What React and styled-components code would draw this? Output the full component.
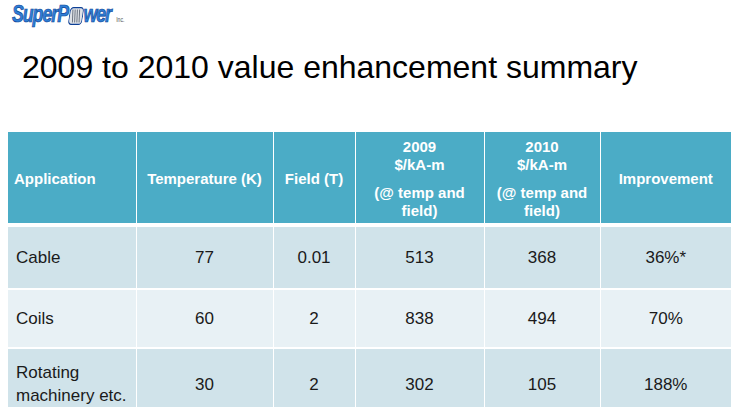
import styled, { createGlobalStyle } from "styled-components";

const GlobalStyle = createGlobalStyle`
  html, body {
    margin: 0;
    padding: 0;
    background: #ffffff;
    overflow: hidden;
  }
  body {
    font-family: "Liberation Sans", Arial, sans-serif;
  }
`;

const Page = styled.div`
  width: 732px;
  height: 407px;
  overflow: hidden;
  display: flex;
  flex-direction: column;
`;

const LogoRow = styled.div`
  display: flex;
  align-items: flex-end;
  height: 30px;
  padding-left: 12px;
`;

const Brand = styled.div`
  display: flex;
  align-items: center;
  transform: scaleX(0.74);
  transform-origin: left bottom;
`;

const Word = styled.span`
  font-size: 24px;
  font-weight: 700;
  font-style: italic;
  letter-spacing: -1.4px;
  color: #2f7fd6;
  -webkit-text-stroke: 0.7px #0d3f95;
  line-height: 28px;
`;

const Inc = styled.span`
  font-size: 7px;
  color: #555;
  line-height: 10px;
  margin: 12px 0 0 7px;
`;

const Title = styled.h1`
  margin: 19px 0 0 22px;
  font-size: 32px;
  font-weight: 400;
  line-height: 40px;
  color: #000;
`;

const Table = styled.table`
  margin: 45px 0 0 8px;
  width: 723px;
  border-collapse: collapse;
  table-layout: fixed;
`;

const HeadCell = styled.th`
  background: #4bacc6;
  color: #ffffff;
  font-size: 15px;
  font-weight: 700;
  height: 88px;
  padding: 3px 6px 0;
  text-align: ${(p) => (p.$left ? "left" : "center")};
  line-height: 18px;
  border-right: 1px solid #ffffff;
  border-bottom: 4px solid #ffffff;
  &:last-child {
    border-right: none;
  }
`;

const Para = styled.div`
  & + & {
    margin-top: 10px;
  }
`;

const Row = styled.tr`
  background: ${(p) => (p.$alt ? "#e8f1f5" : "#d0e3ea")};
  height: ${(p) => p.$h}px;
`;

const Cell = styled.td`
  font-size: 17px;
  color: #1a1a1a;
  padding: 0 8px;
  line-height: 23px;
  text-align: ${(p) => (p.$left ? "left" : "center")};
  border-right: 1px solid #ffffff;
  border-bottom: 2px solid #ffffff;
  &:last-child {
    border-right: none;
  }
`;

const Tire = () => (
  <svg width="19" height="18" viewBox="0 0 19 18" style={{ margin: "3px 1px 0", transform: "skewX(-12deg)" }}>
    <rect x="0.6" y="0.6" width="17.8" height="16.8" rx="4" fill="#dfe3e8" stroke="#0d3f95" strokeWidth="1.2" />
    {[4, 7, 10, 13].map((x) => (
      <line key={x} x1={x} y1="2.5" x2={x + 2} y2="15.5" stroke="#6b7380" strokeWidth="1.3" />
    ))}
  </svg>
);

const widths = [128, 137, 82, 129, 116, 131];

const rows = [
  { h: 64, cells: ["Cable", "77", "0.01", "513", "368", "36%*"] },
  { h: 59, alt: true, cells: ["Coils", "60", "2", "838", "494", "70%"] },
  { h: 72, cells: [<>Rotating<br />machinery etc.</>, "30", "2", "302", "105", "188%"] },
];

export default function App() {
  return (
    <Page>
      <GlobalStyle />
      <LogoRow>
        <Brand>
          <Word>SuperP</Word>
          <Tire />
          <Word>wer</Word>
          <Inc>Inc.</Inc>
        </Brand>
      </LogoRow>
      <Title>2009 to 2010 value enhancement summary</Title>
      <Table>
        <colgroup>
          {widths.map((w, i) => (
            <col key={i} style={{ width: w }} />
          ))}
        </colgroup>
        <thead>
          <tr>
            <HeadCell $left>Application</HeadCell>
            <HeadCell>Temperature (K)</HeadCell>
            <HeadCell>Field (T)</HeadCell>
            <HeadCell>
              <Para>2009<br />$/kA-m</Para>
              <Para>(@ temp and field)</Para>
            </HeadCell>
            <HeadCell>
              <Para>2010<br />$/kA-m</Para>
              <Para>(@ temp and field)</Para>
            </HeadCell>
            <HeadCell>Improvement</HeadCell>
          </tr>
        </thead>
        <tbody>
          {rows.map((r, i) => (
            <Row key={i} $alt={r.alt} $h={r.h}>
              {r.cells.map((c, j) => (
                <Cell key={j} $left={j === 0}>
                  {c}
                </Cell>
              ))}
            </Row>
          ))}
        </tbody>
      </Table>
    </Page>
  );
}
